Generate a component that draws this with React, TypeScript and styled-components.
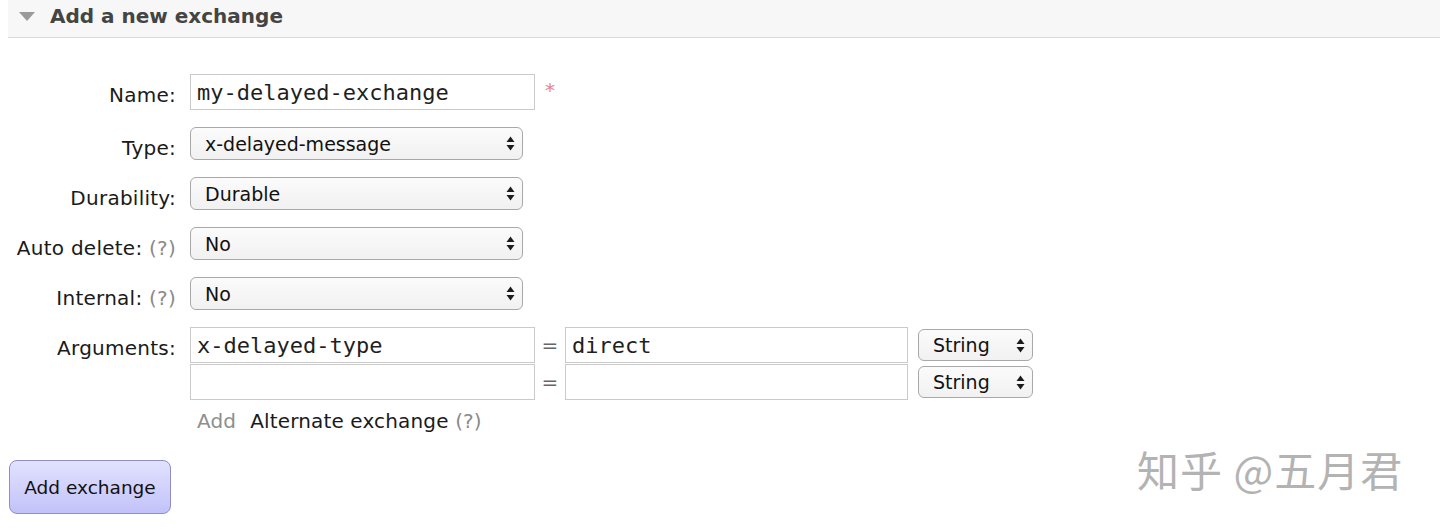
import React from "react";
import styled, { createGlobalStyle } from "styled-components";

const GlobalStyle = createGlobalStyle`
  html, body {
    margin: 0;
    padding: 0;
    background: #ffffff;
  }
  body {
    font-family: "DejaVu Sans", Verdana, sans-serif;
    color: #1a1a1a;
  }
  * { box-sizing: border-box; }
`;

const Page = styled.div`
  position: relative;
  min-height: 529px;
  padding: 0 0 0 8px;
  overflow: hidden;
`;

const SectionHeader = styled.div`
  display: flex;
  align-items: flex-start;
  height: 38px;
  padding: 4px 0 0 11px;
  background: #f7f7f7;
  border-bottom: 1px solid #d9d9d9;
`;

const Toggle = styled.svg`
  width: 16px;
  height: 9px;
  margin-top: 8px;
  margin-right: 15px;
  flex: none;
`;

const Title = styled.h2`
  margin: 0;
  font-size: 20px;
  line-height: 24px;
  font-weight: bold;
  color: #444444;
`;

const Form = styled.div`
  display: grid;
  grid-template-columns: 168px auto;
  column-gap: 14px;
  row-gap: 17px;
  margin-top: 36px;
  justify-content: start;
`;

const Label = styled.div`
  text-align: right;
  font-size: 20px;
  line-height: 24px;
  letter-spacing: 0.25px;
  padding-top: 9px;
  white-space: nowrap;
  color: #1a1a1a;
`;

const Help = styled.span`
  color: #8a8a8a;
`;

const Field = styled.div`
  display: flex;
  align-items: center;
`;

const TextInput = styled.input<{ $w: number }>`
  width: ${(p) => p.$w}px;
  height: 36px;
  padding: 0 6px;
  border: 1px solid #cacaca;
  border-radius: 0;
  background: #ffffff;
  font-family: "DejaVu Sans Mono", Menlo, monospace;
  font-size: 22px;
  color: #1f1f1f;
  outline: none;
  margin: 0;
`;

const Required = styled.span`
  margin-left: 10px;
  margin-top: -4px;
  font-size: 20px;
  color: #e98383;
`;

const SelectBox = styled.div<{ $w: number; $h: number }>`
  display: flex;
  align-items: center;
  justify-content: space-between;
  width: ${(p) => p.$w}px;
  height: ${(p) => p.$h}px;
  padding: 0 7px 0 14px;
  border: 1px solid #a8a8a8;
  border-radius: 6px;
  background: linear-gradient(#fbfbfb, #f1f1f1);
  font-size: 19px;
  color: #111111;
  flex: none;
`;

const Arrows = styled.svg`
  width: 9px;
  height: 15px;
  flex: none;
`;

const ArgsBlock = styled.div`
  display: flex;
  flex-direction: column;
  gap: 1px;
`;

const ArgRow = styled.div`
  display: flex;
  align-items: center;
  height: 36px;
`;

const Equals = styled.span`
  width: 30px;
  text-align: center;
  font-size: 20px;
  color: #666666;
`;

const TypeGap = styled.div`
  width: 10px;
  flex: none;
`;

const AddLine = styled.div`
  display: flex;
  gap: 14px;
  margin-top: 9px;
  padding-left: 7px;
  font-size: 20px;
  line-height: 24px;
  letter-spacing: 0.15px;
`;

const AddLink = styled.span`
  color: #8f8f8f;
`;

const AltLink = styled.span`
  color: #1a1a1a;
`;

const SubmitButton = styled.button`
  display: block;
  margin: 27px 0 0 1px;
  width: 162px;
  height: 54px;
  padding: 0 14px;
  border: 1px solid #8e8ec6;
  border-radius: 8px;
  background: linear-gradient(#e2e2ff, #c2c2fa);
  font-family: "DejaVu Sans", Verdana, sans-serif;
  font-size: 18.5px;
  color: #111111;
  cursor: pointer;
`;

const Watermark = styled.div`
  position: absolute;
  left: 1137px;
  top: 448px;
  font-family: "Noto Sans CJK SC", sans-serif;
  font-size: 42px;
  line-height: 42px;
  letter-spacing: 1px;
  color: #b3b3b3;
  text-shadow: 1px 1px 0 #ffffff;
  white-space: nowrap;
  pointer-events: none;
`;

const SelectArrows = () => (
  <Arrows viewBox="0 0 9 15">
    <polygon points="0.5,6 4.5,0.5 8.5,6" fill="#1c1c1c" />
    <polygon points="0.5,9 8.5,9 4.5,14.5" fill="#1c1c1c" />
  </Arrows>
);

const Select = ({ value, w, h }: { value: string; w: number; h: number }) => (
  <SelectBox $w={w} $h={h}>
    <span>{value}</span>
    <SelectArrows />
  </SelectBox>
);

const args = [
  { key: "x-delayed-type", value: "direct" },
  { key: "", value: "" },
];

export default function App() {
  return (
    <>
      <GlobalStyle />
      <Page>
        <SectionHeader>
          <Toggle viewBox="0 0 16 9">
            <polygon points="0,0 16,0 8,9" fill="#9a9a9a" />
          </Toggle>
          <Title>Add a new exchange</Title>
        </SectionHeader>

        <Form>
          <Label>Name:</Label>
          <Field>
            <TextInput $w={345} readOnly value="my-delayed-exchange" />
            <Required>*</Required>
          </Field>

          <Label>Type:</Label>
          <Select value="x-delayed-message" w={333} h={33} />

          <Label>Durability:</Label>
          <Select value="Durable" w={333} h={33} />

          <Label>
            Auto delete: <Help>(?)</Help>
          </Label>
          <Select value="No" w={333} h={33} />

          <Label>
            Internal: <Help>(?)</Help>
          </Label>
          <Select value="No" w={333} h={33} />

          <Label>Arguments:</Label>
          <div>
            <ArgsBlock>
              {args.map((a, i) => (
                <ArgRow key={i}>
                  <TextInput $w={345} readOnly value={a.key} />
                  <Equals>=</Equals>
                  <TextInput $w={343} readOnly value={a.value} />
                  <TypeGap />
                  <Select value="String" w={115} h={32} />
                </ArgRow>
              ))}
            </ArgsBlock>
            <AddLine>
              <AddLink>Add</AddLink>
              <AltLink>
                Alternate exchange <Help>(?)</Help>
              </AltLink>
            </AddLine>
          </div>
        </Form>

        <SubmitButton>Add exchange</SubmitButton>

        <Watermark>知乎 @五月君</Watermark>
      </Page>
    </>
  );
}
